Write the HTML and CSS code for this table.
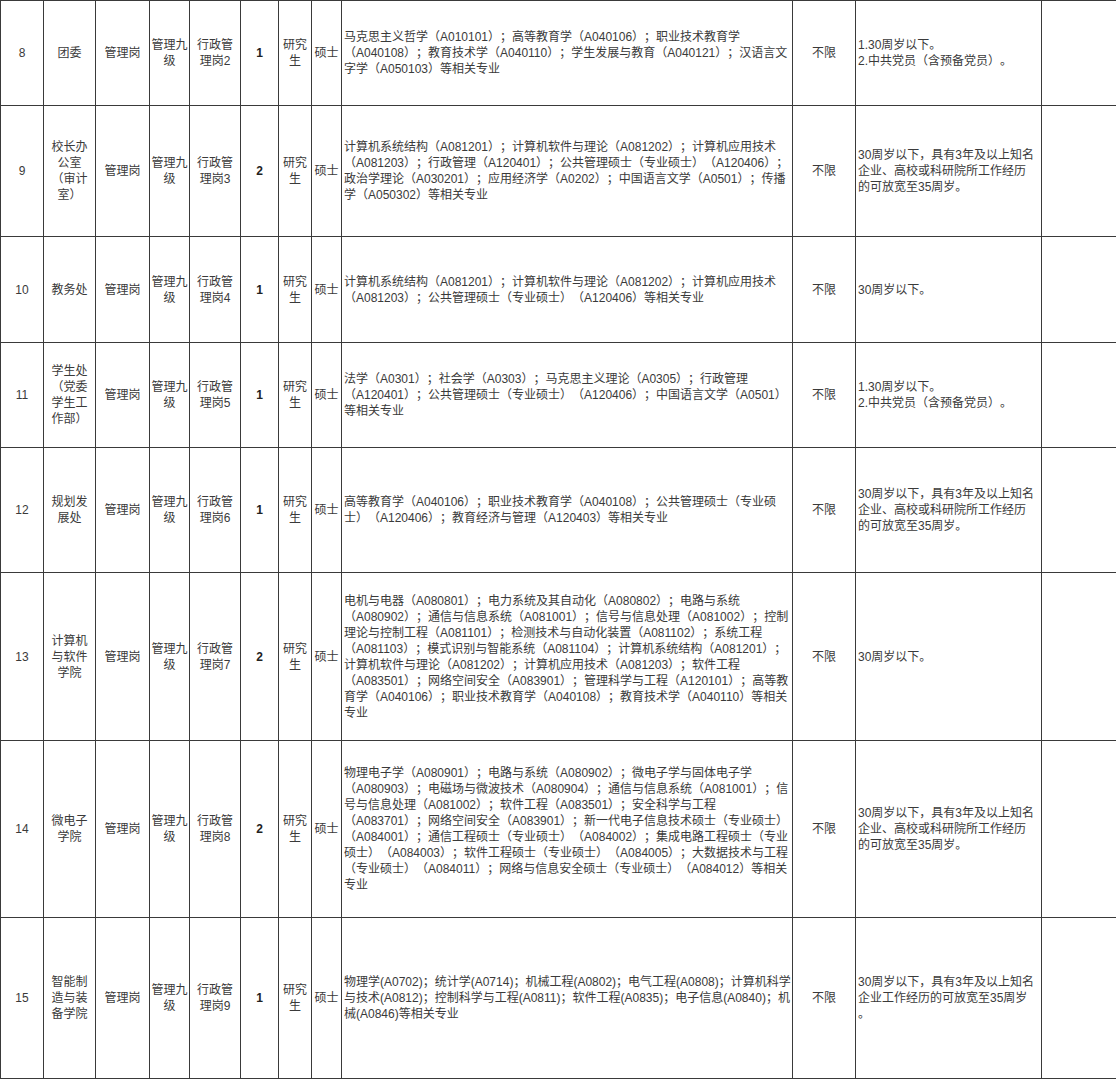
FILE: index.html
```html
<!DOCTYPE html>
<html lang="zh-CN">
<head>
<meta charset="utf-8">
<title>招聘岗位表</title>
<link rel="stylesheet" href="styles.css">
</head>
<body>
<table class="jobs">
  <colgroup>
    <col class="c-no"><col class="c-dept"><col class="c-type"><col class="c-level"><col class="c-name"><col class="c-count"><col class="c-edu"><col class="c-deg"><col class="c-major"><col class="c-pol"><col class="c-req"><col class="c-note">
  </colgroup>
  <tbody>
    <tr class="r8">
      <td>8</td><td>团委</td><td>管理岗</td><td>管理九<br>级</td><td>行政管<br>理岗2</td><td class="num">1</td><td>研究<br>生</td><td>硕士</td>
      <td class="txt">马克思主义哲学（A010101）；高等教育学（A040106）；职业技术教育学<br>（A040108）；教育技术学（A040110）；学生发展与教育（A040121）；汉语言文<br>字学（A050103）等相关专业</td>
      <td>不限</td><td class="txt">1.30周岁以下。<br>2.中共党员（含预备党员）。</td><td></td>
    </tr>
    <tr class="r9">
      <td>9</td><td>校长办<br>公室<br>（审计<br>室）</td><td>管理岗</td><td>管理九<br>级</td><td>行政管<br>理岗3</td><td class="num">2</td><td>研究<br>生</td><td>硕士</td>
      <td class="txt">计算机系统结构（A081201）；计算机软件与理论（A081202）；计算机应用技术<br>（A081203）；行政管理（A120401）；公共管理硕士（专业硕士）（A120406）；<br>政治学理论（A030201）；应用经济学（A0202）；中国语言文学（A0501）；传播<br>学（A050302）等相关专业</td>
      <td>不限</td><td class="txt">30周岁以下，具有3年及以上知名<br>企业、高校或科研院所工作经历<br>的可放宽至35周岁。</td><td></td>
    </tr>
    <tr class="r10">
      <td>10</td><td>教务处</td><td>管理岗</td><td>管理九<br>级</td><td>行政管<br>理岗4</td><td class="num">1</td><td>研究<br>生</td><td>硕士</td>
      <td class="txt">计算机系统结构（A081201）；计算机软件与理论（A081202）；计算机应用技术<br>（A081203）；公共管理硕士（专业硕士）（A120406）等相关专业</td>
      <td>不限</td><td class="txt">30周岁以下。</td><td></td>
    </tr>
    <tr class="r11">
      <td>11</td><td>学生处<br>（党委<br>学生工<br>作部）</td><td>管理岗</td><td>管理九<br>级</td><td>行政管<br>理岗5</td><td class="num">1</td><td>研究<br>生</td><td>硕士</td>
      <td class="txt">法学（A0301）；社会学（A0303）；马克思主义理论（A0305）；行政管理<br>（A120401）；公共管理硕士（专业硕士）（A120406）；中国语言文学（A0501）<br>等相关专业</td>
      <td>不限</td><td class="txt">1.30周岁以下。<br>2.中共党员（含预备党员）。</td><td></td>
    </tr>
    <tr class="r12">
      <td>12</td><td>规划发<br>展处</td><td>管理岗</td><td>管理九<br>级</td><td>行政管<br>理岗6</td><td class="num">1</td><td>研究<br>生</td><td>硕士</td>
      <td class="txt">高等教育学（A040106）；职业技术教育学（A040108）；公共管理硕士（专业硕<br>士）（A120406）；教育经济与管理（A120403）等相关专业</td>
      <td>不限</td><td class="txt">30周岁以下，具有3年及以上知名<br>企业、高校或科研院所工作经历<br>的可放宽至35周岁。</td><td></td>
    </tr>
    <tr class="r13">
      <td>13</td><td>计算机<br>与软件<br>学院</td><td>管理岗</td><td>管理九<br>级</td><td>行政管<br>理岗7</td><td class="num">2</td><td>研究<br>生</td><td>硕士</td>
      <td class="txt">电机与电器（A080801）；电力系统及其自动化（A080802）；电路与系统<br>（A080902）；通信与信息系统（A081001）；信号与信息处理（A081002）；控制<br>理论与控制工程（A081101）；检测技术与自动化装置（A081102）；系统工程<br>（A081103）；模式识别与智能系统（A081104）；计算机系统结构（A081201）；<br>计算机软件与理论（A081202）；计算机应用技术（A081203）；软件工程<br>（A083501）；网络空间安全（A083901）；管理科学与工程（A120101）；高等教<br>育学（A040106）；职业技术教育学（A040108）；教育技术学（A040110）等相关<br>专业</td>
      <td>不限</td><td class="txt">30周岁以下。</td><td></td>
    </tr>
    <tr class="r14">
      <td>14</td><td>微电子<br>学院</td><td>管理岗</td><td>管理九<br>级</td><td>行政管<br>理岗8</td><td class="num">2</td><td>研究<br>生</td><td>硕士</td>
      <td class="txt">物理电子学（A080901）；电路与系统（A080902）；微电子学与固体电子学<br>（A080903）；电磁场与微波技术（A080904）；通信与信息系统（A081001）；信<br>号与信息处理（A081002）；软件工程（A083501）；安全科学与工程<br>（A083701）；网络空间安全（A083901）；新一代电子信息技术硕士（专业硕士）<br>（A084001）；通信工程硕士（专业硕士）（A084002）；集成电路工程硕士（专业<br>硕士）（A084003）；软件工程硕士（专业硕士）（A084005）；大数据技术与工程<br>（专业硕士）（A084011）；网络与信息安全硕士（专业硕士）（A084012）等相关<br>专业</td>
      <td>不限</td><td class="txt">30周岁以下，具有3年及以上知名<br>企业、高校或科研院所工作经历<br>的可放宽至35周岁。</td><td></td>
    </tr>
    <tr class="r15">
      <td>15</td><td>智能制<br>造与装<br>备学院</td><td>管理岗</td><td>管理九<br>级</td><td>行政管<br>理岗9</td><td class="num">1</td><td>研究<br>生</td><td>硕士</td>
      <td class="txt">物理学(A0702)；统计学(A0714)；机械工程(A0802)；电气工程(A0808)；计算机科学<br>与技术(A0812)；控制科学与工程(A0811)；软件工程(A0835)；电子信息(A0840)；机<br>械(A0846)等相关专业</td>
      <td>不限</td><td class="txt">30周岁以下，具有3年及以上知名<br>企业工作经历的可放宽至35周岁<br>。</td><td></td>
    </tr>
  </tbody>
</table>
</body>
</html>
```

FILE: styles.css
```css
html, body {
  margin: 0;
  padding: 0;
  background: #ffffff;
}

.jobs {
  border-collapse: collapse;
  table-layout: fixed;
  width: 1116px;
  font-family: "Liberation Sans", "Noto Sans CJK SC", sans-serif;
  font-size: 12px;
  line-height: 16px;
  color: #3a3a3a;
  text-spacing-trim: space-all;
}

.jobs td {
  border: 1px solid #3a3a3a;
  padding: 0 1px;
  text-align: center;
  vertical-align: middle;
  white-space: nowrap;
  overflow: hidden;
}

.jobs td.txt {
  text-align: left;
  padding-left: 2px;
}

.jobs td.num {
  font-weight: bold;
  color: #222222;
}

.c-no { width: 43px; }
.c-dept { width: 52px; }
.c-type { width: 54px; }
.c-level { width: 40px; }
.c-name { width: 51px; }
.c-count { width: 38px; }
.c-edu { width: 33px; }
.c-deg { width: 30px; }
.c-major { width: 451px; }
.c-pol { width: 63px; }
.c-req { width: 186px; }
.c-note { width: 75px; }

.r8 { height: 105px; }
.r9 { height: 131px; }
.r10 { height: 106px; }
.r11 { height: 105px; }
.r12 { height: 125px; }
.r13 { height: 168px; }
.r14 { height: 177px; }
.r15 { height: 161px; }
```
